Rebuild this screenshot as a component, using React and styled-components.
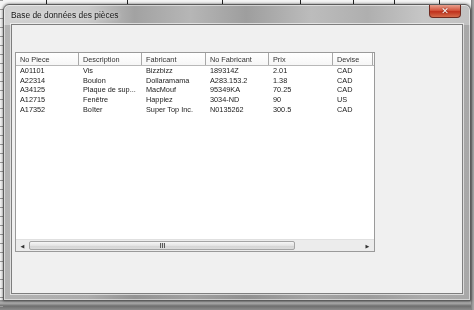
import React from 'react'
import styled, { createGlobalStyle } from 'styled-components'

const GlobalStyle = createGlobalStyle`
  html, body {
    margin: 0;
    padding: 0;
    background: #7c7c7c;
  }
  * {
    box-sizing: border-box;
  }
`

const columns = [
  { title: 'No Piece', width: 63 },
  { title: 'Description', width: 63 },
  { title: 'Fabricant', width: 64 },
  { title: 'No Fabricant', width: 63 },
  { title: 'Prix', width: 64 },
  { title: 'Devise', width: 40 }
]

const pieces = [
  ['A01101', 'Vis', 'Bizzbizz', '189314Z', '2.01', 'CAD'],
  ['A22314', 'Boulon', 'Dollaramama', 'A283.153.2', '1.38', 'CAD'],
  ['A34125', 'Plaque de sup...', 'MacMouf', '95349KA', '70.25', 'CAD'],
  ['A12715', 'Fenêtre', 'Happiez', '3034-ND', '90', 'US'],
  ['A17352', 'Boîter', 'Super Top Inc.', 'N0135262', '300.5', 'CAD']
]

const Screen = styled.div`
  width: 474px;
  height: 310px;
  overflow: hidden;
  display: flex;
  align-items: flex-start;
  padding: 4px 0 0 3px;
  will-change: transform;
  background:
    linear-gradient(90deg, transparent 46px, #222 46px, #222 47px, transparent 47px),
    linear-gradient(90deg, transparent 127px, #222 127px, #222 128px, transparent 128px),
    linear-gradient(90deg, transparent 222px, #222 222px, #222 223px, transparent 223px),
    linear-gradient(90deg, transparent 300px, #222 300px, #222 301px, transparent 301px),
    linear-gradient(90deg, transparent 353px, #222 353px, #222 354px, transparent 354px),
    linear-gradient(90deg, transparent 394px, #222 394px, #222 395px, transparent 395px),
    linear-gradient(90deg, transparent 439px, #222 439px, #222 440px, transparent 440px),
    repeating-linear-gradient(180deg, #9a9a9a 0, #9a9a9a 1px, transparent 1px, transparent 9px),
    linear-gradient(90deg, transparent 471px, #7a7a7a 471px, #a4a4a4 473px),
    linear-gradient(180deg, #f4f4f4 0, #f4f4f4 300px, #8a8a8a 300px, #b0b0b0 303px, #6e6e6e 306px, #8c8c8c 310px);
  background-size: 100% 5px, 100% 5px, 100% 5px, 100% 5px, 100% 5px, 100% 5px, 100% 5px, 3px 100%, 100% 100%, 100% 100%;
  background-repeat: no-repeat;
  font-family: 'Liberation Sans', Arial, sans-serif;
`

const Window = styled.div`
  width: 468px;
  height: 297px;
  display: flex;
  flex-direction: column;
  border: 1px solid #5c5c5c;
  border-radius: 6px 6px 0 0;
  background:
    linear-gradient(180deg, transparent 0, transparent 20px, rgba(120, 120, 120, 0.35) 20px, rgba(120, 120, 120, 0.35) 100%),
    linear-gradient(
      90deg,
      #d2d2d2 0%,
      #c9c9c9 18%,
      #a2a2a2 28%,
      #b6b6b6 40%,
      #9e9e9e 52%,
      #bcbcbc 66%,
      #afafaf 78%,
      #c6c6c6 90%,
      #c2c2c2 100%
    );
  box-shadow: inset 0 0 0 1px rgba(255, 255, 255, 0.5), 0 0 3px rgba(0, 0, 0, 0.6);
`

const TitleBar = styled.div`
  height: 19px;
  display: flex;
  align-items: flex-start;
  padding: 0 9px 0 7px;
`

const Title = styled.span`
  margin-top: 5px;
  font-size: 8.4px;
  color: #151515;
  text-shadow: 0 0 4px rgba(255, 255, 255, 0.9);
`

const CloseButton = styled.div`
  margin-left: auto;
  width: 32px;
  height: 13px;
  display: flex;
  align-items: center;
  justify-content: center;
  border: 1px solid #6e2a20;
  border-top: none;
  border-radius: 0 0 4px 4px;
  background: linear-gradient(180deg, #e8a08e 0%, #d4553d 45%, #c0311c 55%, #d46a4a 100%);
  color: #fff;
  font-family: 'DejaVu Sans', sans-serif;
  font-size: 9px;
  font-weight: bold;
  line-height: 1;
  text-shadow: 0 0 2px #5a1a10;
`

const Client = styled.div`
  flex: 1;
  margin: 0 7px 6px 7px;
  border: 1px solid #7e7e7e;
  background: #f0f0f0;
  box-shadow: 0 0 0 1px rgba(255, 255, 255, 0.6);
  padding: 27px 0 0 3px;
`

const ListView = styled.div`
  width: 360px;
  height: 200px;
  display: flex;
  flex-direction: column;
  border: 1px solid #9a9a9a;
  background: #fff;
  font-size: 7.3px;
  color: #222;
`

const HeaderRow = styled.div`
  display: flex;
  height: 13px;
  border-bottom: 1px solid #b8b8b8;
  background: linear-gradient(180deg, #ffffff 0%, #f6f6f6 100%);
`

const HeaderCell = styled.div`
  width: ${p => p.$width}px;
  flex-shrink: 0;
  display: flex;
  align-items: center;
  padding-left: 4px;
  border-right: 1px solid #a8a8a8;
  color: #333;
`

const Rows = styled.div`
  flex: 1;
`

const Row = styled.div`
  display: flex;
  height: 9.6px;
  align-items: center;
`

const Cell = styled.div`
  width: ${p => p.$width}px;
  flex-shrink: 0;
  padding-left: 4px;
  white-space: nowrap;
  overflow: hidden;
`

const ScrollBar = styled.div`
  height: 12px;
  display: flex;
  align-items: stretch;
  background: #ececec;
  border-top: 1px solid #e0e0e0;
`

const ArrowButton = styled.div`
  width: 13px;
  display: flex;
  align-items: center;
  justify-content: center;
  color: #333;
  font-size: 5px;
  font-family: 'DejaVu Sans', sans-serif;
`

const Thumb = styled.div`
  width: 266px;
  margin: 1px 0;
  border: 1px solid #a4a4a4;
  border-radius: 2px;
  background: linear-gradient(180deg, #f6f6f6 0%, #e4e4e4 50%, #d4d4d4 51%, #dcdcdc 100%);
  display: flex;
  align-items: center;
  justify-content: center;
`

const Grip = styled.div`
  width: 5px;
  height: 5px;
  background: repeating-linear-gradient(90deg, #5a5a5a 0, #5a5a5a 1px, #d8d8d8 1px, #d8d8d8 2px);
`

const Track = styled.div`
  flex: 1;
`

const App = () => (
  <>
    <GlobalStyle />
    <Screen>
      <Window>
        <TitleBar>
          <Title>Base de données des pièces</Title>
          <CloseButton>✕</CloseButton>
        </TitleBar>
        <Client>
          <ListView>
            <HeaderRow>
              {columns.map(c => (
                <HeaderCell key={c.title} $width={c.width}>
                  {c.title}
                </HeaderCell>
              ))}
            </HeaderRow>
            <Rows>
              {pieces.map(row => (
                <Row key={row[0]}>
                  {row.map((value, i) => (
                    <Cell key={i} $width={columns[i].width}>
                      {value}
                    </Cell>
                  ))}
                </Row>
              ))}
            </Rows>
            <ScrollBar>
              <ArrowButton>◀</ArrowButton>
              <Thumb>
                <Grip />
              </Thumb>
              <Track />
              <ArrowButton>▶</ArrowButton>
            </ScrollBar>
          </ListView>
        </Client>
      </Window>
    </Screen>
  </>
)

export default App
